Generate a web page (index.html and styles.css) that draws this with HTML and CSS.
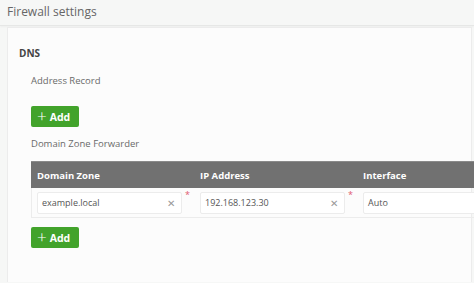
FILE: index.html
```html
<!DOCTYPE html>
<html lang="en">
<head>
  <meta charset="UTF-8">
  <title>Firewall settings</title>
  <link rel="stylesheet" href="styles.css">
</head>
<body>
  <div class="page-title">Firewall settings</div>

  <div class="card">
    <h2 class="section-title">DNS</h2>

    <div class="sub-section">
      <div class="sub-title">Address Record</div>
      <button class="add-btn"><span class="plus">+</span> Add</button>

      <div class="sub-title forwarder">Domain Zone Forwarder</div>
      <div class="table">
        <div class="table-head">
          <div class="col">Domain Zone</div>
          <div class="col">IP Address</div>
          <div class="col">Interface</div>
        </div>
        <div class="table-row">
          <div class="col">
            <div class="field">
              <span>example.local</span>
              <span class="clear">&#x2715;</span>
            </div>
            <span class="req">*</span>
          </div>
          <div class="col">
            <div class="field">
              <span>192.168.123.30</span>
              <span class="clear">&#x2715;</span>
            </div>
            <span class="req">*</span>
          </div>
          <div class="col">
            <div class="field">
              <span>Auto</span>
            </div>
          </div>
        </div>
      </div>
      <button class="add-btn after-table"><span class="plus">+</span> Add</button>
    </div>
  </div>
</body>
</html>
```

FILE: styles.css
```css
body {
  margin: 0;
  font-family: "Open Sans", "Noto Sans", sans-serif;
  background-color: #f6f7f6;
  color: #555;
  overflow: hidden;
  height: 283px;
}

.page-title {
  height: 25px;
  line-height: 23px;
  padding-left: 7px;
  font-size: 12px;
  color: #666;
  border-bottom: 1px solid #e6e7e6;
  box-shadow: 0 1px 2px rgba(0,0,0,0.04);
}

.card {
  margin: 1px 2px 0 7px;
  height: 254px;
  background: #fcfcfc;
  border: 1px solid #ececec;
  border-bottom: none;
  padding: 0 0 0 11px;
}

.section-title {
  margin: 0;
  padding-top: 19px;
  font-size: 10px;
  font-weight: bold;
  color: #444;
  line-height: 12px;
}

.sub-section {
  padding-left: 12px;
}

.sub-title {
  font-size: 9.5px;
  color: #6a6a6a;
  margin-top: 16px;
  line-height: 12px;
}

.sub-title.forwarder {
  margin-top: 11px;
}

.add-btn {
  display: flex;
  align-items: center;
  gap: 3px;
  margin-top: 19px;
  width: 48px;
  height: 21px;
  padding: 0 0 0 6px;
  border: none;
  border-radius: 2px;
  background: #42a32b;
  color: white;
  font-family: inherit;
  font-size: 10.5px;
  font-weight: bold;
}

.add-btn.after-table {
  margin-top: 0;
}

.plus {
  font-size: 17px;
  font-weight: 300;
  line-height: 1;
  margin-top: -2px;
}

.table {
  margin-top: 11px;
  width: 520px;
  margin-bottom: 9px;
}

.table-head {
  display: flex;
  height: 26px;
  align-items: center;
  background: #717171;
  color: white;
  font-size: 9.5px;
  font-weight: bold;
  border-top: 1px solid #8a8a8a;
}

.table-head .col {
  padding-left: 6px;
}

.col {
  width: 163px;
  box-sizing: border-box;
  display: flex;
  align-items: flex-start;
}

.table-row {
  display: flex;
  height: 29px;
  align-items: center;
  border-bottom: 1px solid #ececec;
  border-left: 1px solid #ececec;
}

.table-row .col {
  padding-left: 5px;
}

.field {
  width: 145px;
  height: 22px;
  box-sizing: border-box;
  display: flex;
  justify-content: space-between;
  align-items: center;
  padding: 0 6px 0 4px;
  background: white;
  border: 1px solid #ececec;
  border-radius: 2px;
  font-size: 9px;
  color: #555;
}

.table-row .col:last-child .field {
  width: 160px;
}

.clear {
  color: #999;
  font-size: 10px;
}

.req {
  color: #e05a6e;
  font-size: 9px;
  margin-left: 3px;
  line-height: 1;
  margin-top: -2px;
}
```
